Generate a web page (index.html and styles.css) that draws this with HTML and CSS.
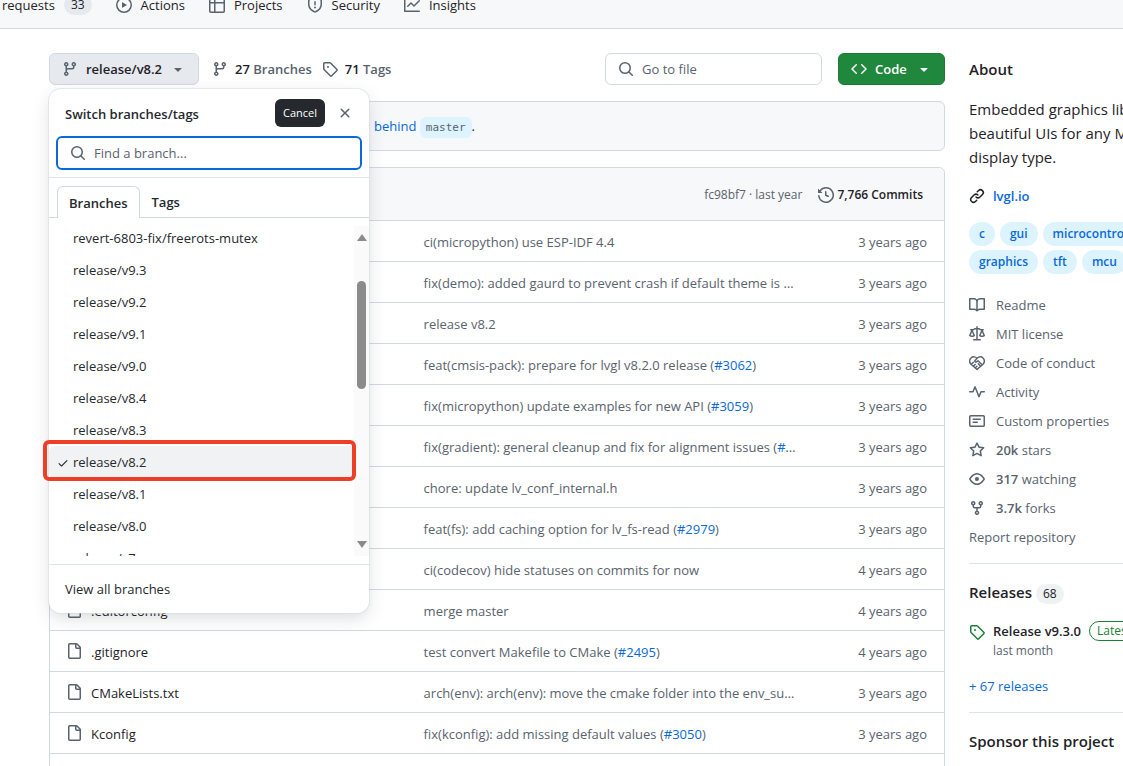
FILE: index.html
```html
<!DOCTYPE html>
<html lang="en">
<head>
  <meta charset="UTF-8">
  <meta name="viewport" content="width=device-width, initial-scale=1.0">
  <title>lvgl at release/v8.2</title>
  <link rel="stylesheet" href="styles.css">
</head>
<body>
  <svg class="sprite" aria-hidden="true">
    <symbol id="i-branch" viewBox="0 0 16 16"><path d="M9.5 3.25a2.25 2.25 0 1 1 3 2.122V6A2.5 2.5 0 0 1 10 8.5H6a1 1 0 0 0-1 1v1.128a2.251 2.251 0 1 1-1.5 0V5.372a2.25 2.25 0 1 1 1.5 0v1.836A2.493 2.493 0 0 1 6 7h4a1 1 0 0 0 1-1v-.628A2.25 2.25 0 0 1 9.5 3.25Zm-6 0a.75.75 0 1 0 1.5 0 .75.75 0 0 0-1.5 0Zm8.25-.75a.75.75 0 1 0 0 1.5.75.75 0 0 0 0-1.5ZM4.25 12a.75.75 0 1 0 0 1.5.75.75 0 0 0 0-1.5Z"/></symbol>
    <symbol id="i-play" viewBox="0 0 16 16"><path d="M8 0a8 8 0 1 1 0 16A8 8 0 0 1 8 0ZM1.5 8a6.5 6.5 0 1 0 13 0 6.5 6.5 0 0 0-13 0Zm4.879-2.773 4.264 2.559a.25.25 0 0 1 0 .428l-4.264 2.559A.25.25 0 0 1 6 10.559V5.442a.25.25 0 0 1 .379-.215Z"/></symbol>
    <symbol id="i-table" viewBox="0 0 16 16"><path d="M0 1.75C0 .784.784 0 1.75 0h12.5C15.216 0 16 .784 16 1.75v12.5A1.75 1.75 0 0 1 14.25 16H1.75A1.75 1.75 0 0 1 0 14.25ZM6.5 6.5v8h7.75a.25.25 0 0 0 .25-.25V6.5Zm8-1.5V1.75a.25.25 0 0 0-.25-.25H6.5V5Zm-13 1.5v7.75c0 .138.112.25.25.25H5v-8ZM5 5V1.5H1.75a.25.25 0 0 0-.25.25V5Z"/></symbol>
    <symbol id="i-shield" viewBox="0 0 16 16"><path d="M7.467.133a1.748 1.748 0 0 1 1.066 0l5.25 1.68A1.75 1.75 0 0 1 15 3.48V7c0 1.566-.32 3.182-1.303 4.682-.983 1.498-2.585 2.813-5.032 3.855a1.697 1.697 0 0 1-1.33 0c-2.447-1.042-4.049-2.357-5.032-3.855C1.32 10.182 1 8.566 1 7V3.48a1.75 1.75 0 0 1 1.217-1.667Zm.61 1.429a.25.25 0 0 0-.153 0l-5.25 1.68a.25.25 0 0 0-.174.238V7c0 1.358.275 2.666 1.057 3.86.784 1.194 2.121 2.34 4.366 3.297a.196.196 0 0 0 .154 0c2.245-.956 3.582-2.104 4.366-3.298C13.225 9.666 13.5 8.36 13.5 7V3.48a.251.251 0 0 0-.174-.237l-5.25-1.68ZM8.75 4.75v3a.75.75 0 0 1-1.5 0v-3a.75.75 0 0 1 1.5 0ZM9 10.5a1 1 0 1 1-2 0 1 1 0 0 1 2 0Z"/></symbol>
    <symbol id="i-graph" viewBox="0 0 16 16"><path d="M1.5 1.75V13.5h13.75a.75.75 0 0 1 0 1.5H.75a.75.75 0 0 1-.75-.75V1.75a.75.75 0 0 1 1.5 0Zm14.28 2.53-5.25 5.25a.75.75 0 0 1-1.06 0L7 7.06 4.28 9.78a.751.751 0 0 1-1.042-.018.751.751 0 0 1-.018-1.042l3.25-3.25a.75.75 0 0 1 1.06 0L10 7.94l4.72-4.72a.751.751 0 0 1 1.042.018.751.751 0 0 1 .018 1.042Z"/></symbol>
    <symbol id="i-tag" viewBox="0 0 16 16"><path d="M1 7.775V2.75C1 1.784 1.784 1 2.75 1h5.025c.464 0 .91.184 1.238.513l6.25 6.25a1.75 1.75 0 0 1 0 2.474l-5.026 5.026a1.75 1.75 0 0 1-2.474 0l-6.25-6.25A1.752 1.752 0 0 1 1 7.775Zm1.5 0c0 .066.026.13.073.177l6.25 6.25a.25.25 0 0 0 .354 0l5.025-5.025a.25.25 0 0 0 0-.354l-6.25-6.25a.25.25 0 0 0-.177-.073H2.75a.25.25 0 0 0-.25.25ZM6 5a1 1 0 1 1 0 2 1 1 0 0 1 0-2Z"/></symbol>
    <symbol id="i-search" viewBox="0 0 16 16"><path d="M10.68 11.74a6 6 0 0 1-7.922-8.982 6 6 0 0 1 8.982 7.922l3.04 3.04a.749.749 0 0 1-.326 1.275.749.749 0 0 1-.734-.215ZM11.5 7a4.499 4.499 0 1 0-8.997 0A4.499 4.499 0 0 0 11.5 7Z"/></symbol>
    <symbol id="i-code" viewBox="0 0 16 16"><path d="m11.28 3.22 4.25 4.25a.75.75 0 0 1 0 1.06l-4.25 4.25a.749.749 0 0 1-1.275-.326.749.749 0 0 1 .215-.734L13.94 8l-3.72-3.72a.749.749 0 0 1 .326-1.275.749.749 0 0 1 .734.215Zm-6.56 0a.751.751 0 0 1 1.042.018.751.751 0 0 1 .018 1.042L2.06 8l3.72 3.72a.749.749 0 0 1-.326 1.275.749.749 0 0 1-.734-.215L.47 8.53a.75.75 0 0 1 0-1.06Z"/></symbol>
    <symbol id="i-caret" viewBox="0 0 16 16"><path d="m4.427 7.427 3.396 3.396a.25.25 0 0 0 .354 0l3.396-3.396A.25.25 0 0 0 11.396 7H4.604a.25.25 0 0 0-.177.427Z"/></symbol>
    <symbol id="i-history" viewBox="0 0 16 16"><path d="m.427 1.927 1.215 1.215a8.002 8.002 0 1 1-1.6 5.685.75.75 0 1 1 1.493-.154 6.5 6.5 0 1 0 1.18-4.458l1.358 1.358A.25.25 0 0 1 3.896 6H.25A.25.25 0 0 1 0 5.75V2.104a.25.25 0 0 1 .427-.177ZM7.75 4a.75.75 0 0 1 .75.75v2.992l2.028.812a.75.75 0 0 1-.557 1.392l-2.5-1A.751.751 0 0 1 7 8.25v-3.5A.75.75 0 0 1 7.75 4Z"/></symbol>
    <symbol id="i-file" viewBox="0 0 16 16"><path d="M2 1.75C2 .784 2.784 0 3.75 0h6.586c.464 0 .909.184 1.237.513l2.914 2.914c.329.328.513.773.513 1.237v9.586A1.75 1.75 0 0 1 13.25 16h-9.5A1.75 1.75 0 0 1 2 14.25Zm1.75-.25a.25.25 0 0 0-.25.25v12.5c0 .138.112.25.25.25h9.5a.25.25 0 0 0 .25-.25V6h-2.75A1.75 1.75 0 0 1 9 4.25V1.5Zm6.75.062V4.25c0 .138.112.25.25.25h2.688l-.011-.013-2.914-2.914-.013-.011Z"/></symbol>
    <symbol id="i-x" viewBox="0 0 16 16"><path d="M3.72 3.72a.75.75 0 0 1 1.06 0L8 6.94l3.22-3.22a.749.749 0 0 1 1.275.326.749.749 0 0 1-.215.734L9.06 8l3.22 3.22a.749.749 0 0 1-.326 1.275.749.749 0 0 1-.734-.215L8 9.06l-3.22 3.22a.751.751 0 0 1-1.042-.018.751.751 0 0 1-.018-1.042L6.94 8 3.72 4.78a.75.75 0 0 1 0-1.06Z"/></symbol>
    <symbol id="i-check" viewBox="0 0 16 16"><path d="M13.78 4.22a.75.75 0 0 1 0 1.06l-7.25 7.25a.75.75 0 0 1-1.06 0L2.22 9.28a.751.751 0 0 1 .018-1.042.751.751 0 0 1 1.042-.018L6 10.94l6.72-6.72a.75.75 0 0 1 1.06 0Z"/></symbol>
    <symbol id="i-link" viewBox="0 0 16 16"><path d="m7.775 3.275 1.25-1.25a3.5 3.5 0 1 1 4.95 4.95l-2.5 2.5a3.5 3.5 0 0 1-4.95 0 .751.751 0 0 1 .018-1.042.751.751 0 0 1 1.042-.018 1.998 1.998 0 0 0 2.83 0l2.5-2.5a2.002 2.002 0 0 0-2.83-2.83l-1.25 1.25a.751.751 0 0 1-1.042-.018.751.751 0 0 1-.018-1.042Zm-4.69 9.64a1.998 1.998 0 0 0 2.83 0l1.25-1.25a.751.751 0 0 1 1.042.018.751.751 0 0 1 .018 1.042l-1.25 1.25a3.5 3.5 0 1 1-4.95-4.95l2.5-2.5a3.5 3.5 0 0 1 4.95 0 .751.751 0 0 1-.018 1.042.751.751 0 0 1-1.042.018 1.998 1.998 0 0 0-2.83 0l-2.5 2.5a1.998 1.998 0 0 0 0 2.83Z"/></symbol>
    <symbol id="i-book" viewBox="0 0 16 16"><path d="M0 1.75A.75.75 0 0 1 .75 1h4.253c1.227 0 2.317.59 3 1.501A3.743 3.743 0 0 1 11.006 1h4.245a.75.75 0 0 1 .75.75v10.5a.75.75 0 0 1-.75.75h-4.507a2.25 2.25 0 0 0-1.591.659l-.622.621a.75.75 0 0 1-1.06 0l-.622-.621A2.25 2.25 0 0 0 5.258 13H.75a.75.75 0 0 1-.75-.75Zm7.251 10.324.004-5.073-.002-2.253A2.25 2.25 0 0 0 5.003 2.5H1.5v9h3.757a3.75 3.75 0 0 1 1.994.574ZM8.755 4.75l-.004 7.322a3.752 3.752 0 0 1 1.992-.572H14.5v-9h-3.495a2.25 2.25 0 0 0-2.25 2.25Z"/></symbol>
    <symbol id="i-law" viewBox="0 0 16 16"><path d="M8.75.75V2h.985c.304 0 .603.08.867.231l1.29.736c.038.022.08.033.124.033h2.234a.75.75 0 0 1 0 1.5h-.427l2.111 4.692a.75.75 0 0 1-.154.838c-.6.6-1.6.97-2.78.97s-2.18-.37-2.755-.945a.75.75 0 0 1-.154-.838L12.178 4.5h-.162c-.305 0-.604-.079-.868-.231l-1.29-.736a.245.245 0 0 0-.124-.033H8.75V13h2.5a.75.75 0 0 1 0 1.5h-6.5a.75.75 0 0 1 0-1.5h2.5V3.5h-.984a.245.245 0 0 0-.124.033l-1.289.737c-.265.15-.564.23-.869.23h-.162l2.112 4.692a.75.75 0 0 1-.154.838C5.2 10.6 4.2 11 3 11S.85 10.6.245 10.055a.75.75 0 0 1-.154-.838L2.178 4.5H1.75a.75.75 0 0 1 0-1.5h2.234a.249.249 0 0 0 .125-.033l1.288-.737c.265-.15.564-.23.869-.23h.984V.75a.75.75 0 0 1 1.5 0Zm2.945 8.477c.285.135.718.273 1.305.273s1.02-.138 1.305-.273L13 6.327Zm-10 0c.285.135.718.273 1.305.273s1.02-.138 1.305-.273L3 6.327Z"/></symbol>
    <symbol id="i-conduct" viewBox="0 0 16 16"><path d="M8 3.2C6.6 1.5 3.6 1.3 2 3 .3 4.8.4 7.4 2 9.2L8 14.6l6-5.4c1.6-1.8 1.7-4.4 0-6.2-1.6-1.7-4.2-1.5-5.6 0L6 5.5c-.7.8.5 2 1.4 1.4L9 5.8l3.8 3.6M2.5 9l1.9-1.7M6.4 12.8l1.5-1.5M4.500 11l1.700-1.600M9.300 8.800l1.900 1.900" fill="none" stroke="currentColor" stroke-width="1.400" stroke-linecap="round" stroke-linejoin="round"/></symbol>
    <symbol id="i-pulse" viewBox="0 0 16 16"><path d="M6 2c.306 0 .582.187.696.471L10 10.731l1.304-3.26A.751.751 0 0 1 12 7h3.25a.75.75 0 0 1 0 1.5h-2.742l-1.812 4.528a.751.751 0 0 1-1.392 0L6 4.77 4.696 8.03A.75.75 0 0 1 4 8.5H.75a.75.75 0 0 1 0-1.5h2.742l1.812-4.529A.751.751 0 0 1 6 2Z"/></symbol>
    <symbol id="i-note" viewBox="0 0 16 16"><path d="M0 3.75C0 2.784.784 2 1.75 2h12.5c.966 0 1.75.784 1.75 1.75v8.5A1.75 1.75 0 0 1 14.25 14H1.75A1.75 1.75 0 0 1 0 12.25Zm1.75-.25a.25.25 0 0 0-.25.25v8.5c0 .138.112.25.25.25h12.5a.25.25 0 0 0 .25-.25v-8.5a.25.25 0 0 0-.25-.25ZM3.5 6.25a.75.75 0 0 1 .75-.75h7a.75.75 0 0 1 0 1.5h-7a.75.75 0 0 1-.75-.75Zm.75 2.25h4a.75.75 0 0 1 0 1.5h-4a.75.75 0 0 1 0-1.5Z"/></symbol>
    <symbol id="i-star" viewBox="0 0 16 16"><path d="M8 .25a.75.75 0 0 1 .673.418l1.882 3.815 4.21.612a.75.75 0 0 1 .416 1.279l-3.046 2.97.719 4.192a.751.751 0 0 1-1.088.791L8 12.347l-3.766 1.98a.75.75 0 0 1-1.088-.79l.72-4.194L.818 6.374a.75.75 0 0 1 .416-1.28l4.21-.611L7.327.668A.75.75 0 0 1 8 .25Zm0 2.445L6.615 5.5a.75.75 0 0 1-.564.41l-3.097.45 2.24 2.184a.75.75 0 0 1 .216.664l-.528 3.084 2.769-1.456a.75.75 0 0 1 .698 0l2.77 1.456-.53-3.084a.75.75 0 0 1 .216-.664l2.24-2.183-3.096-.45a.75.75 0 0 1-.564-.41L8 2.694Z"/></symbol>
    <symbol id="i-eye" viewBox="0 0 16 16"><path d="M8 2c1.981 0 3.671.992 4.933 2.078 1.27 1.091 2.187 2.345 2.637 3.023a1.62 1.62 0 0 1 0 1.798c-.45.678-1.367 1.932-2.637 3.023C11.67 13.008 9.981 14 8 14c-1.981 0-3.671-.992-4.933-2.078C1.797 10.83.88 9.576.43 8.898a1.62 1.62 0 0 1 0-1.798c.45-.677 1.367-1.931 2.637-3.022C4.33 2.992 6.019 2 8 2ZM1.679 7.932a.12.12 0 0 0 0 .136c.411.622 1.241 1.75 2.366 2.717C5.176 11.758 6.527 12.5 8 12.5c1.473 0 2.825-.742 3.955-1.715 1.124-.967 1.954-2.096 2.366-2.717a.12.12 0 0 0 0-.136c-.412-.621-1.242-1.75-2.366-2.717C10.824 4.242 9.473 3.5 8 3.5c-1.473 0-2.825.742-3.955 1.715-1.124.967-1.954 2.096-2.366 2.717ZM8 10a2 2 0 1 1-.001-3.999A2 2 0 0 1 8 10Z"/></symbol>
    <symbol id="i-fork" viewBox="0 0 16 16"><path d="M5 5.372v.878c0 .414.336.75.75.75h4.5a.75.75 0 0 0 .75-.75v-.878a2.25 2.25 0 1 1 1.5 0v.878a2.25 2.25 0 0 1-2.25 2.25h-1.5v2.128a2.251 2.251 0 1 1-1.5 0V8.5h-1.5A2.25 2.25 0 0 1 3.5 6.25v-.878a2.25 2.25 0 1 1 1.5 0ZM5 3.25a.75.75 0 1 0-1.5 0 .75.75 0 0 0 1.5 0Zm6.75.75a.75.75 0 1 0 0-1.5.75.75 0 0 0 0 1.5Zm-3 8.75a.75.75 0 1 0-1.5 0 .75.75 0 0 0 1.5 0Z"/></symbol>
  </svg>

  <nav class="repo-nav">
    <a href="#">requests <span class="counter nav-counter">33</span></a>
    <a href="#"><svg class="icon"><use href="#i-play"/></svg>Actions</a>
    <a href="#"><svg class="icon"><use href="#i-table"/></svg>Projects</a>
    <a href="#"><svg class="icon"><use href="#i-shield"/></svg>Security</a>
    <a href="#"><svg class="icon"><use href="#i-graph"/></svg>Insights</a>
  </nav>

  <div class="layout">
    <main>
      <div class="toolbar">
        <div class="branch-picker">
          <button type="button" class="btn branch-btn">
            <svg class="icon"><use href="#i-branch"/></svg>
            <span>release/v8.2</span>
            <svg class="icon"><use href="#i-caret"/></svg>
          </button>

          <div class="popup">
            <div class="popup-head">
              <h2>Switch branches/tags</h2>
              <span class="tooltip">Cancel</span>
              <button type="button" class="close" aria-label="Cancel"><svg class="icon"><use href="#i-x"/></svg></button>
            </div>
            <div class="popup-search">
              <label class="field field-focus">
                <svg class="icon"><use href="#i-search"/></svg>
                <input type="text" placeholder="Find a branch..." aria-label="Find a branch">
              </label>
            </div>
            <div class="tabs">
              <button type="button" class="tab tab-active">Branches</button>
              <button type="button" class="tab">Tags</button>
            </div>
            <div class="list-wrap">
              <ul class="branch-list">
                <li><a href="#">revert-6803-fix/freerots-mutex</a></li>
                <li><a href="#">release/v9.3</a></li>
                <li><a href="#">release/v9.2</a></li>
                <li><a href="#">release/v9.1</a></li>
                <li><a href="#">release/v9.0</a></li>
                <li><a href="#">release/v8.4</a></li>
                <li><a href="#">release/v8.3</a></li>
                <li><a href="#" class="selected"><svg class="icon"><use href="#i-check"/></svg>release/v8.2</a></li>
                <li><a href="#">release/v8.1</a></li>
                <li><a href="#">release/v8.0</a></li>
                <li><a href="#">release/v7</a></li>
              </ul>
              <div class="scrollbar">
                <span class="arrow-up"></span>
                <span class="thumb"></span>
                <span class="arrow-down"></span>
              </div>
            </div>
            <a href="#" class="view-all">View all branches</a>
            <div class="highlight"></div>
          </div>
        </div>

        <a href="#" class="stat"><svg class="icon"><use href="#i-branch"/></svg><span><b>27</b> Branches</span></a>
        <a href="#" class="stat"><svg class="icon"><use href="#i-tag"/></svg><span><b>71</b> Tags</span></a>

        <label class="field go-to-file">
          <svg class="icon"><use href="#i-search"/></svg>
          <input type="text" placeholder="Go to file" aria-label="Go to file">
        </label>
        <button type="button" class="btn code-btn">
          <svg class="icon"><use href="#i-code"/></svg>
          <span>Code</span>
          <svg class="icon"><use href="#i-caret"/></svg>
        </button>
      </div>

      <div class="compare">
        <a href="#">behind</a> <code>master</code>.
      </div>

      <div class="files">
        <div class="files-head">
          <span class="sha">fc98bf7 · last year</span>
          <a href="#" class="commits"><svg class="icon"><use href="#i-history"/></svg>7,766 Commits</a>
        </div>
        <table>
          <tbody>
            <tr><td class="name"></td><td class="msg">ci(micropython) use ESP-IDF 4.4</td><td class="age">3 years ago</td></tr>
            <tr><td class="name"></td><td class="msg">fix(demo): added gaurd to prevent crash if default theme is missing</td><td class="age">3 years ago</td></tr>
            <tr><td class="name"></td><td class="msg">release v8.2</td><td class="age">3 years ago</td></tr>
            <tr><td class="name"></td><td class="msg">feat(cmsis-pack): prepare for lvgl v8.2.0 release (<a href="#">#3062</a>)</td><td class="age">3 years ago</td></tr>
            <tr><td class="name"></td><td class="msg">fix(micropython) update examples for new API (<a href="#">#3059</a>)</td><td class="age">3 years ago</td></tr>
            <tr><td class="name"></td><td class="msg">fix(gradient): general cleanup and fix for alignment issues (<a href="#">#3036</a>)</td><td class="age">3 years ago</td></tr>
            <tr><td class="name"></td><td class="msg">chore: update lv_conf_internal.h</td><td class="age">3 years ago</td></tr>
            <tr><td class="name"></td><td class="msg">feat(fs): add caching option for lv_fs-read (<a href="#">#2979</a>)</td><td class="age">3 years ago</td></tr>
            <tr><td class="name"></td><td class="msg">ci(codecov) hide statuses on commits for now</td><td class="age">4 years ago</td></tr>
            <tr><td class="name"><svg class="icon"><use href="#i-file"/></svg><a href="#">.editorconfig</a></td><td class="msg">merge master</td><td class="age">4 years ago</td></tr>
            <tr><td class="name"><svg class="icon"><use href="#i-file"/></svg><a href="#">.gitignore</a></td><td class="msg">test convert Makefile to CMake (<a href="#">#2495</a>)</td><td class="age">4 years ago</td></tr>
            <tr><td class="name"><svg class="icon"><use href="#i-file"/></svg><a href="#">CMakeLists.txt</a></td><td class="msg">arch(env): arch(env): move the cmake folder into the env_support folder</td><td class="age">3 years ago</td></tr>
            <tr><td class="name"><svg class="icon"><use href="#i-file"/></svg><a href="#">Kconfig</a></td><td class="msg">fix(kconfig): add missing default values (<a href="#">#3050</a>)</td><td class="age">3 years ago</td></tr>
            <tr><td class="name"></td><td class="msg"></td><td class="age"></td></tr>
          </tbody>
        </table>
      </div>
    </main>

    <aside>
      <section>
        <h2>About</h2>
        <p class="about">Embedded graphics library to create beautiful UIs for any MCU, MPU and display type.</p>
        <a href="#" class="site"><svg class="icon"><use href="#i-link"/></svg>lvgl.io</a>
        <div class="topics"><a href="#">c</a><a href="#">gui</a><a href="#">microcontroller</a></div>
        <div class="topics"><a href="#">graphics</a><a href="#">tft</a><a href="#">mcu</a></div>
        <ul class="facts">
          <li><a href="#"><svg class="icon"><use href="#i-book"/></svg>Readme</a></li>
          <li><a href="#"><svg class="icon"><use href="#i-law"/></svg>MIT license</a></li>
          <li><a href="#"><svg class="icon"><use href="#i-conduct"/></svg>Code of conduct</a></li>
          <li><a href="#"><svg class="icon"><use href="#i-pulse"/></svg>Activity</a></li>
          <li><a href="#"><svg class="icon"><use href="#i-note"/></svg>Custom properties</a></li>
          <li><a href="#"><svg class="icon"><use href="#i-star"/></svg><span><b>20k</b> stars</span></a></li>
          <li><a href="#"><svg class="icon"><use href="#i-eye"/></svg><span><b>317</b> watching</span></a></li>
          <li><a href="#"><svg class="icon"><use href="#i-fork"/></svg><span><b>3.7k</b> forks</span></a></li>
          <li><a href="#">Report repository</a></li>
        </ul>
      </section>
      <section>
        <h2>Releases <span class="counter">68</span></h2>
        <div class="release">
          <svg class="icon"><use href="#i-tag"/></svg>
          <div>
            <div class="release-name"><a href="#">Release v9.3.0</a><span class="latest">Latest</span></div>
            <div class="release-date">last month</div>
          </div>
        </div>
        <a href="#" class="more">+ 67 releases</a>
      </section>
      <section>
        <h2>Sponsor this project</h2>
      </section>
    </aside>
  </div>
</body>
</html>
```
FILE: styles.css
```css
* {
  box-sizing: border-box;
}

html {
  overflow: hidden;
}

body {
  margin: 0;
  font-family: "Open Sans", "Noto Sans", sans-serif;
  font-size: 13px;
  line-height: 20px;
  color: #1f2328;
  background: #fff;
  overflow: hidden;
}

a {
  color: #0969da;
  text-decoration: none;
}

h2, p, ul {
  margin: 0;
  padding: 0;
}

ul {
  list-style: none;
}

b {
  font-weight: 600;
}

button, input {
  font: inherit;
  color: inherit;
}

.sprite {
  display: none;
}

.icon {
  flex: none;
  width: 16px;
  height: 16px;
  fill: currentColor;
  color: #59636e;
}

.counter {
  display: inline-block;
  padding: 0 7px;
  border-radius: 20px;
  background: #eff1f3;
  font-size: 12px;
  font-weight: 500;
  line-height: 20px;
}

/* top navigation, scrolled half out of view */
.repo-nav {
  display: flex;
  align-items: flex-end;
  gap: 24px;
  height: 29px;
  padding: 0 2px 13px;
  background: #f6f8fa;
  border-bottom: 1px solid #d1d9e0;
}

.repo-nav a {
  display: flex;
  align-items: center;
  gap: 9px;
  color: #1f2328;
}

.nav-counter {
  background: #e6eaef;
}

.layout {
  display: grid;
  grid-template-columns: minmax(0, 1fr) 296px;
  gap: 24px;
  margin-right: -142px;
  padding: 24px 0 0 49px;
}

/* toolbar */
.toolbar {
  display: flex;
  align-items: center;
  margin-bottom: 16px;
}

.btn {
  display: flex;
  align-items: center;
  gap: 8px;
  height: 32px;
  padding: 0 12px;
  border: 1px solid #d1d9e0;
  border-radius: 6px;
  font-weight: 600;
  cursor: pointer;
}

.branch-picker {
  position: relative;
  margin-right: 13px;
}

.branch-btn {
  width: 150px;
  background: #e6eaef;
}

.btn span {
  flex: 1;
  text-align: left;
}

.stat {
  display: flex;
  align-items: center;
  gap: 7px;
  margin-right: 10px;
  color: #59636e;
  font-weight: 600;
}

.stat b {
  color: #1f2328;
}

.field {
  display: flex;
  align-items: center;
  gap: 8px;
  height: 32px;
  padding: 0 12px;
  border: 1px solid #d1d9e0;
  border-radius: 6px;
  background: #fff;
}

.field input {
  width: 100%;
  min-width: 0;
  padding: 0;
  border: 0;
  outline: 0;
  background: none;
}

.field input::placeholder {
  color: #59636e;
  opacity: 1;
}

.go-to-file {
  width: 217px;
  margin: 0 16px 0 auto;
}

.code-btn {
  width: 107px;
  border-color: #1c7a36;
  background: #1f883d;
  color: #fff;
}

.code-btn .icon {
  color: #fff;
}

/* branch popup */
.popup {
  position: absolute;
  z-index: 2;
  top: 36px;
  left: 0;
  width: 320px;
  border-radius: 12px;
  background: #fff;
  box-shadow: 0 0 0 1px #d1d9e080, 0 6px 12px -3px #25292e0a, 0 6px 18px #25292e1f;
  color: #25292e;
}

.popup-head {
  display: flex;
  align-items: center;
  padding: 10px 8px 9px 16px;
}

.popup-head h2 {
  flex: 1;
  padding-top: 2px;
  font-size: 13px;
  font-weight: 600;
}

.tooltip {
  padding: 4px 8px;
  border-radius: 6px;
  background: #25292e;
  color: #fff;
  font-size: 11px;
}

.close {
  display: flex;
  margin-left: 4px;
  padding: 6px 8px;
  border: 0;
  background: none;
}

.popup-search {
  padding: 0 7px 7px;
  border-bottom: 1px solid #d1d9e0b3;
}

.field-focus {
  height: 34px;
  border: 2px solid #0969da;
}

.tabs {
  display: flex;
  padding: 8px 8px 0;
  border-bottom: 1px solid #d1d9e0;
}

.tab {
  height: 31px;
  padding: 0 11px;
  border: 1px solid transparent;
  border-bottom: 0;
  border-radius: 6px 6px 0 0;
  background: none;
  font-weight: 600;
}

.tab-active {
  margin-bottom: -1px;
  height: 32px;
  border-color: #d1d9e0;
  background: #fff;
}

.list-wrap {
  display: flex;
  max-height: 338px;
  margin-bottom: 8px;
  padding-top: 4px;
  overflow: hidden;
}

.branch-list {
  flex: 1;
}

.branch-list a {
  display: flex;
  align-items: center;
  height: 32px;
  padding-left: 24px;
  border-radius: 6px;
  color: #25292e;
}

.branch-list .selected {
  padding-left: 8px;
  background: #f1f2f4;
}

.branch-list .icon {
  width: 12px;
  height: 12px;
  margin: 2px 4px 0 0;
  color: #25292e;
}

.scrollbar {
  display: flex;
  flex-direction: column;
  align-items: center;
  width: 15px;
  height: 330px;
  margin-top: 4px;
  padding: 8px 0;
  background: #fafafa;
}

.arrow-up, .arrow-down {
  border: 5px solid transparent;
  border-top: 0;
  border-bottom: 7px solid #8b8b8b;
}

.arrow-down {
  margin-top: auto;
  border-top: 7px solid #8b8b8b;
  border-bottom: 0;
}

.thumb {
  width: 9px;
  height: 108px;
  margin-top: 40px;
  border-radius: 5px;
  background: #8b8b8b;
}

.view-all {
  display: block;
  padding: 14px 16px;
  border-top: 1px solid #d1d9e0b3;
  color: #25292e;
}

/* marker drawn round the selected branch */
.highlight {
  position: absolute;
  top: 351px;
  left: -6px;
  width: 313px;
  height: 41px;
  border: 4px solid #ed3f25;
  border-radius: 6px;
  pointer-events: none;
}

/* file list */
.compare {
  height: 50px;
  margin-bottom: 16px;
  padding: 14px 16px 14px 324px;
  border: 1px solid #d1d9e0;
  border-radius: 6px;
  background: #f6f8fa;
}

.compare code {
  padding: 4px 6px;
  border-radius: 6px;
  background: #ddf4ff;
  color: #59636e;
  font-family: "DejaVu Sans Mono", monospace;
  font-size: 11px;
}

.files {
  border: 1px solid #d1d9e0;
  border-radius: 6px 6px 0 0;
}

.files-head {
  display: flex;
  align-items: center;
  justify-content: flex-end;
  gap: 16px;
  height: 52px;
  padding: 1px 21px 0;
  border-radius: 6px 6px 0 0;
  background: #f6f8fa;
  font-size: 12px;
}

.sha {
  color: #59636e;
}

.commits {
  display: flex;
  align-items: center;
  gap: 3px;
  color: #1f2328;
  font-weight: 600;
}

table {
  width: 100%;
  table-layout: fixed;
  border-collapse: collapse;
}

td {
  height: 41px;
  padding: 2px 17px 0 16px;
  border-top: 1px solid #d1d9e0;
  overflow: hidden;
  white-space: nowrap;
  text-overflow: ellipsis;
  color: #59636e;
}

.name {
  width: 40%;
}

.name .icon {
  margin-right: 9px;
  vertical-align: -2px;
}

.name a {
  color: #1f2328;
}

.msg {
  width: 46%;
  padding-right: 20px;
}

.age {
  text-align: right;
}

/* sidebar */
aside {
  padding-top: 4px;
}

aside section {
  padding-bottom: 16px;
  margin-bottom: 16px;
  border-bottom: 1px solid #d1d9e0b3;
}

aside h2 {
  font-size: 15px;
  font-weight: 600;
  line-height: 24px;
}

.about {
  margin: 16px 0;
  font-size: 15px;
  line-height: 24px;
}

.site {
  display: flex;
  align-items: center;
  gap: 8px;
  margin: 17px 0 16px;
  font-weight: 600;
}

.site .icon {
  color: #1f2328;
}

.topics {
  display: flex;
  gap: 5px;
  margin-bottom: 4px;
}

.topics a {
  padding: 2px 10px;
  border-radius: 20px;
  background: #ddf4ff;
  font-size: 12px;
  font-weight: 600;
}

.facts {
  margin-top: 21px;
}

.facts li {
  margin-bottom: 9px;
}

.facts li:last-child {
  margin-bottom: 0;
}

.facts a {
  display: flex;
  align-items: center;
  gap: 11px;
  color: #59636e;
}

.release {
  display: flex;
  gap: 8px;
  margin: 17px 0 15px;
}

.release .icon {
  margin-top: 3px;
  color: #1a7f37;
}

.release-name {
  display: flex;
  align-items: center;
  gap: 8px;
  font-weight: 600;
}

.release-name a {
  color: #1f2328;
}

.latest {
  padding: 0 7px;
  border: 1px solid #1a7f37;
  border-radius: 20px;
  color: #1a7f37;
  font-size: 12px;
  font-weight: 500;
  line-height: 18px;
}

.release-date {
  color: #59636e;
  font-size: 12px;
}
```
